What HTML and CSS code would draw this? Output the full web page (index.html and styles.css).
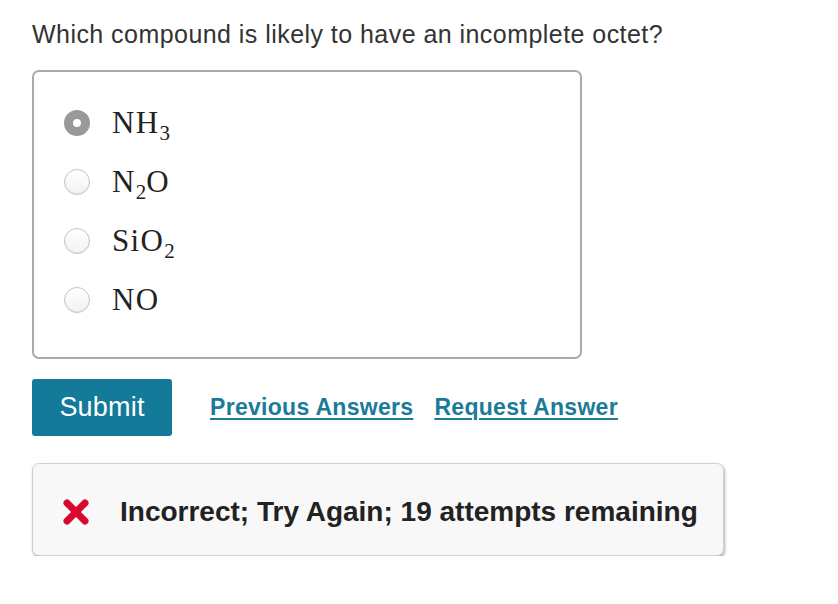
FILE: index.html
```html
<!DOCTYPE html>
<html>
<head>
<meta charset="utf-8">
<link rel="stylesheet" href="styles.css">
</head>
<body>
<div class="page">
  <h1 class="question">Which compound is likely to have an incomplete octet?</h1>
  <div class="options">
    <div class="option"><span class="radio selected"></span><span class="formula">NH<sub>3</sub></span></div>
    <div class="option"><span class="radio"></span><span class="formula">N<sub>2</sub>O</span></div>
    <div class="option"><span class="radio"></span><span class="formula">SiO<sub>2</sub></span></div>
    <div class="option"><span class="radio"></span><span class="formula">NO</span></div>
  </div>
  <div class="actions">
    <button class="submit">Submit</button>
    <a class="link" href="#">Previous Answers</a>
    <a class="link" href="#">Request Answer</a>
  </div>
  <div class="feedback">
    <svg class="xicon" width="26" height="26" viewBox="0 0 26 26"><path d="M4 4 L22 22 M22 4 L4 22" stroke="#d9082e" stroke-width="7" stroke-linecap="round"/></svg>
    <span class="feedback-text">Incorrect; Try Again; 19 attempts remaining</span>
  </div>
</div>
</body>
</html>
```
FILE: styles.css
```css
html, body {
  margin: 0;
  padding: 0;
  background: #fff;
}
.page {
  padding: 17px 0 0 32px;
  font-family: "Liberation Sans", Arial, sans-serif;
}
.question {
  margin: 0;
  font-weight: normal;
  font-size: 25px;
  letter-spacing: 0.45px;
  line-height: 34px;
  color: #333;
}
.options {
  margin-top: 19px;
  width: 550px;
  height: 289px;
  box-sizing: border-box;
  border: 2px solid #aaa;
  border-radius: 7px;
  padding: 38px 0 0 30px;
  display: flex;
  flex-direction: column;
  gap: 33px;
}
.option {
  display: flex;
  align-items: center;
  height: 26px;
  gap: 22px;
}
.radio {
  width: 26px;
  height: 26px;
  box-sizing: border-box;
  border-radius: 50%;
  border: 1px solid #c4c4c4;
  background: linear-gradient(#fff, #f2f2f2);
  box-shadow: inset 0 -1px 1px rgba(0,0,0,0.06);
  flex: none;
}
.radio.selected {
  border: 9px solid #999;
  background: #fff;
  box-shadow: none;
}
.formula {
  font-family: "Liberation Serif", "Times New Roman", serif;
  font-size: 31px;
  letter-spacing: 1.3px;
  color: #222;
  line-height: 26px;
}
.formula sub {
  font-size: 21px;
  vertical-align: -7px;
  line-height: 0;
  letter-spacing: 0;
}
.actions {
  margin-top: 20px;
  display: flex;
  align-items: center;
  height: 57px;
}
.submit {
  width: 140px;
  height: 57px;
  background: #137a99;
  color: #fff;
  border: none;
  border-radius: 3px;
  font-family: "Liberation Sans", Arial, sans-serif;
  font-size: 27px;
  letter-spacing: 0.2px;
  padding: 0;
  margin-right: 38px;
}
.link {
  font-weight: bold;
  font-size: 23px;
  color: #1a7b99;
  text-decoration: underline;
  text-decoration-thickness: 2px;
  text-underline-offset: 3px;
  margin-right: 21px;
  letter-spacing: 0.3px;
}
.feedback {
  margin-top: 27px;
  width: 692px;
  height: 93px;
  box-sizing: border-box;
  background: #f8f8f8;
  border: 1px solid #d0d0d0;
  border-radius: 7px;
  box-shadow: 1px 2px 3px rgba(0,0,0,0.3);
  display: flex;
  align-items: center;
  padding: 4px 0 0 30px;
}
.xicon {
  flex: none;
  margin-right: 31px;
}
.feedback-text {
  font-weight: bold;
  font-size: 28px;
  color: #222;
  letter-spacing: 0px;
}
```
